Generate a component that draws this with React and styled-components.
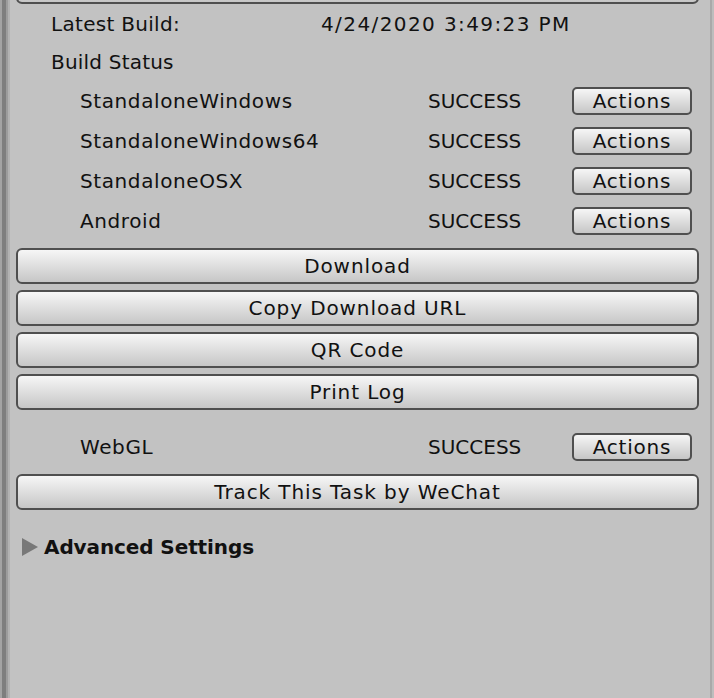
import React from "react";
import styled, { createGlobalStyle } from "styled-components";

const GlobalStyle = createGlobalStyle`
  html, body {
    margin: 0;
    padding: 0;
    background: #c2c2c2;
  }
  body {
    font-family: "DejaVu Sans", "Liberation Sans", sans-serif;
    color: #111;
  }
`;

const targets = [
  { name: "StandaloneWindows", status: "SUCCESS" },
  { name: "StandaloneWindows64", status: "SUCCESS" },
  { name: "StandaloneOSX", status: "SUCCESS" },
  { name: "Android", status: "SUCCESS" },
];

const extraButtons = ["Download", "Copy Download URL", "QR Code", "Print Log"];

const App = () => {
  return (
    <>
      <GlobalStyle />
      <Window>
        <Gutter />
        <Content>
          <WideButton $top />
          <InfoRow>
            <span>Latest Build:</span>
            <DateText>4/24/2020 3:49:23 PM</DateText>
          </InfoRow>
          <Heading>Build Status</Heading>

          {targets.map((t) => (
            <TargetRow key={t.name}>
              <span>{t.name}</span>
              <Status>{t.status}</Status>
              <SmallButton>Actions</SmallButton>
            </TargetRow>
          ))}

          <ButtonStack>
            {extraButtons.map((label) => (
              <WideButton key={label}>{label}</WideButton>
            ))}
          </ButtonStack>

          <TargetRow $spaced>
            <span>WebGL</span>
            <Status>SUCCESS</Status>
            <SmallButton>Actions</SmallButton>
          </TargetRow>
          <WideButton>Track This Task by WeChat</WideButton>

          <Foldout>
            <svg width="16" height="18" viewBox="0 0 16 18">
              <path d="M0 0 L16 9 L0 18 Z" fill="#787878" />
            </svg>
            <span>Advanced Settings</span>
          </Foldout>
        </Content>
        <RightEdge />
      </Window>
    </>
  );
};

export default App;

let Window = styled.div`
  display: flex;
  width: 714px;
  height: 698px;
  overflow: hidden;
  background: #c2c2c2;
`;

let Gutter = styled.div`
  width: 10px;
  flex-shrink: 0;
  background: linear-gradient(
    to right,
    #a3a3a3 0,
    #a3a3a3 2px,
    #7e7e7e 2px,
    #7e7e7e 6px,
    #9c9c9c 6px,
    #9c9c9c 8px,
    #b2b2b2 8px
  );
`;

let RightEdge = styled.div`
  width: 4px;
  flex-shrink: 0;
  background: linear-gradient(to right, #a9a9a9 0, #a9a9a9 2px, #bdbdbd 2px);
`;

let Content = styled.div`
  flex: 1;
  display: flex;
  flex-direction: column;
  padding: 0 11px 0 6px;
  font-size: 20px;
  letter-spacing: 0.6px;
`;

let WideButton = styled.div`
  height: 32px;
  margin-top: ${({ $top }) => ($top ? "-32px" : "0")};
  border: 2px solid #4f4f4f;
  border-radius: 6px;
  background: linear-gradient(to bottom, #f6f6f6, #c6c6c6);
  display: flex;
  align-items: center;
  justify-content: center;
  font-size: 20px;
  letter-spacing: 0.9px;
  color: #111;
  flex-shrink: 0;
`;

let InfoRow = styled.div`
  display: grid;
  grid-template-columns: 270px 1fr;
  height: 40px;
  align-items: center;
  padding-left: 35px;
  letter-spacing: 0.3px;
`;

let DateText = styled.span`
  letter-spacing: 1.4px;
`;

let Heading = styled.div`
  height: 36px;
  display: flex;
  align-items: center;
  padding-left: 35px;
  margin-bottom: 1px;
  letter-spacing: 0.2px;
`;

let TargetRow = styled.div`
  display: grid;
  grid-template-columns: 348px 144px 120px;
  height: 40px;
  align-items: center;
  padding-left: 64px;
  margin-top: ${({ $spaced }) => ($spaced ? "17px" : "0")};
  margin-bottom: ${({ $spaced }) => ($spaced ? "7px" : "0")};
`;

let Status = styled.span`
  letter-spacing: 0;
`;

let SmallButton = styled.div`
  height: 24px;
  border: 2px solid #4f4f4f;
  border-radius: 5px;
  background: linear-gradient(to bottom, #f6f6f6, #c6c6c6);
  display: flex;
  align-items: center;
  justify-content: center;
  font-size: 20px;
  letter-spacing: 0.8px;
`;

let ButtonStack = styled.div`
  display: flex;
  flex-direction: column;
  gap: 6px;
  margin-top: 7px;
`;

let Foldout = styled.div`
  display: flex;
  align-items: center;
  gap: 6px;
  height: 34px;
  margin-top: 20px;
  padding-left: 6px;
  font-weight: bold;
  font-size: 20px;
  letter-spacing: -0.1px;
`;
